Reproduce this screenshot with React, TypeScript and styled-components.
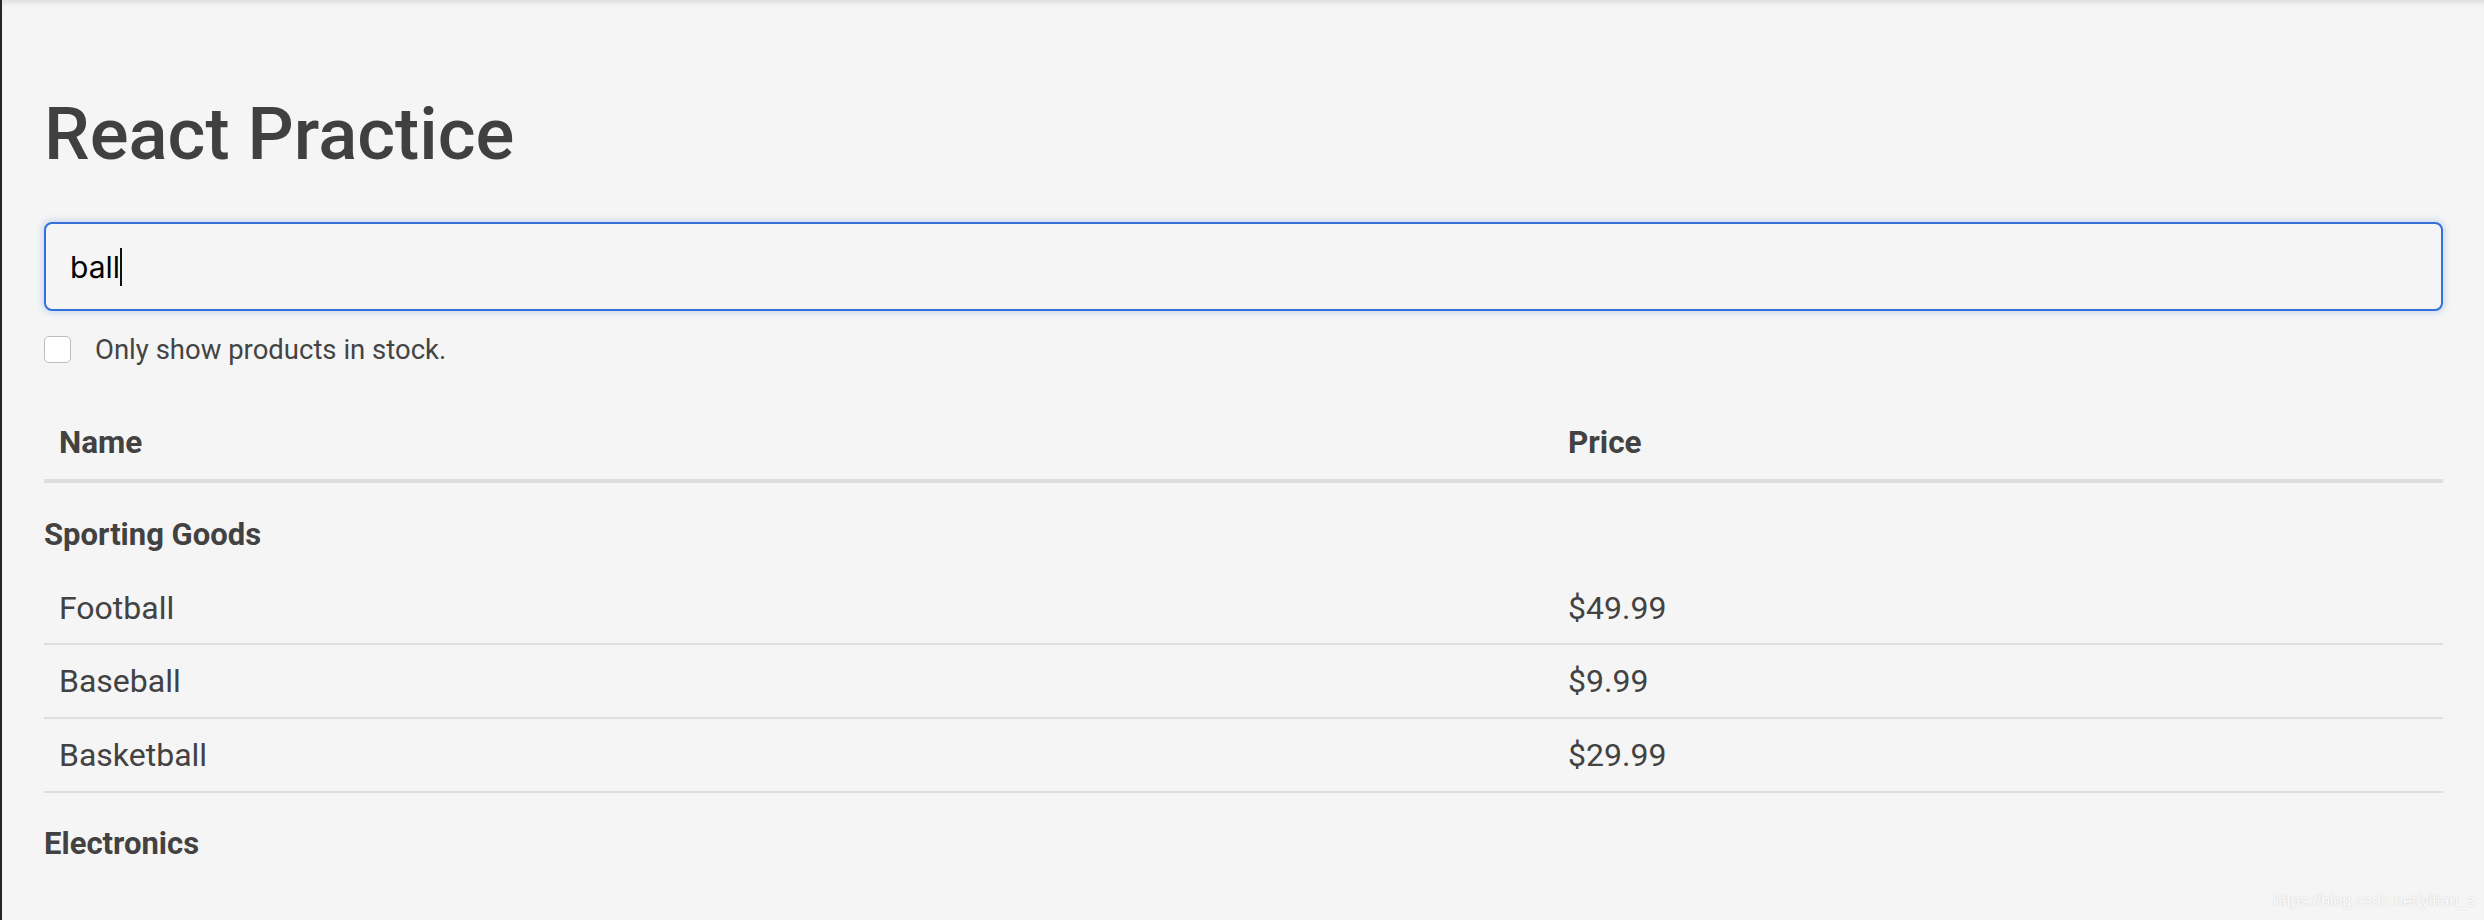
import React, { useState } from "react";
import styled, { createGlobalStyle } from "styled-components";

const GlobalStyle = createGlobalStyle`
  html, body {
    margin: 0;
    padding: 0;
    background: #f5f5f5;
  }
  body {
    font-family: Roboto, "Noto Sans", Arial, sans-serif;
    color: #424242;
  }
`;

const Page = styled.div`
  position: relative;
  box-sizing: border-box;
  min-height: 920px;
  border-left: 2px solid #262626;
  padding: 92px 41px 0 42px;
  box-shadow: inset 0 6px 6px -4px rgba(0, 0, 0, 0.12);
  display: flex;
  flex-direction: column;
`;

const Title = styled.h1`
  margin: 0;
  font-family: Roboto, sans-serif;
  font-size: 72.5px;
  font-weight: 500;
  line-height: normal;
  color: #404040;
`;

const SearchField = styled.div`
  position: relative;
  margin-top: 45px;
`;

const SearchInput = styled.input`
  box-sizing: border-box;
  display: block;
  width: 100%;
  height: 89px;
  padding: 0 24px;
  border: 2px solid #3470d8;
  border-radius: 8px;
  background: #f5f5f5;
  box-shadow: 0 0 6px 2px rgba(52, 112, 216, 0.22);
  font-family: Inter, "Liberation Sans", sans-serif;
  font-size: 30px;
  color: #000;
  outline: none;
  caret-color: transparent;
`;

const Caret = styled.span`
  position: absolute;
  left: 76px;
  top: 26px;
  width: 2px;
  height: 38px;
  background: #111;
  pointer-events: none;
`;

const StockRow = styled.label`
  display: flex;
  align-items: center;
  gap: 24px;
  margin-top: 21.8px;
  font-size: 27.5px;
  line-height: normal;
  color: #444;
`;

const Check = styled.input`
  appearance: none;
  margin: 0;
  width: 27px;
  height: 27px;
  border: 1px solid #bdbdbd;
  border-radius: 5px;
  background: #fff;
`;

const Table = styled.table`
  margin-top: 40.3px;
  width: 100%;
  border-collapse: collapse;
  table-layout: fixed;
`;

const HeadCell = styled.th<{ $w?: string }>`
  width: ${(p) => p.$w || "auto"};
  text-align: left;
  padding: 18px 15px 18.3px;
  font-size: 31.5px;
  font-weight: 700;
  line-height: normal;
  border-bottom: 4px solid #dedede;
`;

const CategoryCell = styled.th`
  text-align: left;
  padding: 32.2px 0 19px;
  font-size: 31px;
  font-weight: 700;
  line-height: normal;
`;

const Cell = styled.td`
  padding: 17px 15px 16.7px;
  font-size: 32px;
  font-weight: 400;
  line-height: normal;
  border-bottom: 2px solid #dedede;
`;

const Watermark = styled.div`
  position: absolute;
  right: 9px;
  bottom: 10px;
  font-family: "Liberation Sans", Arial, sans-serif;
  font-size: 16px;
  color: #fdfdfd;
  text-shadow: 0 0 1.5px rgba(0, 0, 0, 0.22);
`;

type Product = { category: string; name: string; price: string };

const products: Product[] = [
  { category: "Sporting Goods", name: "Football", price: "$49.99" },
  { category: "Sporting Goods", name: "Baseball", price: "$9.99" },
  { category: "Sporting Goods", name: "Basketball", price: "$29.99" },
  { category: "Electronics", name: "iPod Touch", price: "$99.99" },
  { category: "Electronics", name: "iPhone 5", price: "$399.99" },
  { category: "Electronics", name: "Nexus 7", price: "$199.99" },
];

export default function App() {
  const [filter, setFilter] = useState("ball");
  const [inStock, setInStock] = useState(false);

  const categories = Array.from(new Set(products.map((p) => p.category)));
  const match = (p: Product) => p.name.toLowerCase().includes(filter.toLowerCase());

  return (
    <>
      <GlobalStyle />
      <Page>
        <Title>React Practice</Title>
        <SearchField>
          <SearchInput
            autoFocus
            value={filter}
            onChange={(e) => setFilter(e.target.value)}
          />
          {filter === "ball" && <Caret />}
        </SearchField>
        <StockRow>
          <Check
            type="checkbox"
            checked={inStock}
            onChange={(e) => setInStock(e.target.checked)}
          />
          Only show products in stock.
        </StockRow>
        <Table>
          <thead>
            <tr>
              <HeadCell $w="1479px">Name</HeadCell>
              <HeadCell>Price</HeadCell>
            </tr>
          </thead>
          <tbody>
            {categories.map((c) => (
              <React.Fragment key={c}>
                <tr>
                  <CategoryCell colSpan={2}>{c}</CategoryCell>
                </tr>
                {products
                  .filter((p) => p.category === c && match(p))
                  .map((p) => (
                    <tr key={p.name}>
                      <Cell>{p.name}</Cell>
                      <Cell>{p.price}</Cell>
                    </tr>
                  ))}
              </React.Fragment>
            ))}
          </tbody>
        </Table>
        <Watermark>https://blog.csdn.net/yitian_z</Watermark>
      </Page>
    </>
  );
}
